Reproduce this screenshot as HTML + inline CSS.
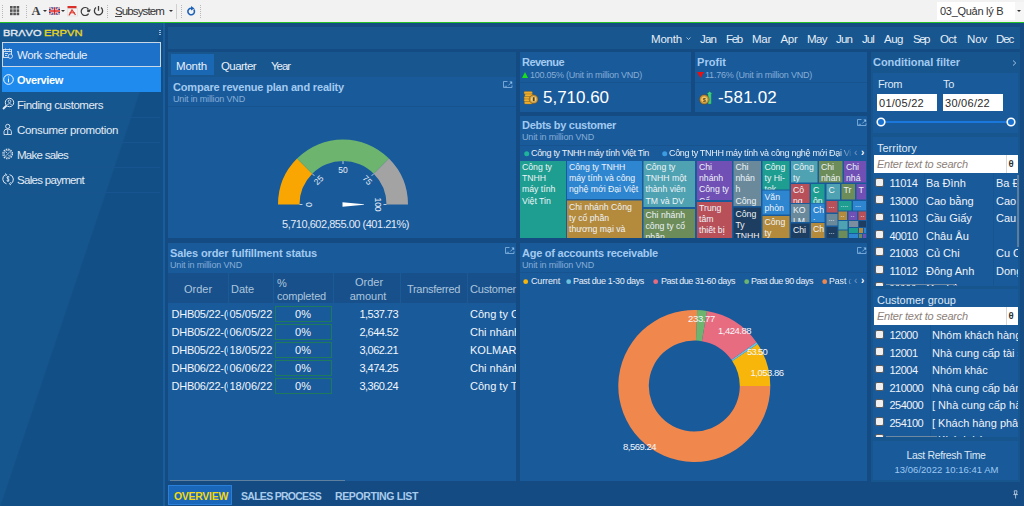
<!DOCTYPE html>
<html><head><meta charset="utf-8">
<style>
*{box-sizing:border-box;margin:0;padding:0}
html,body{width:1024px;height:506px;overflow:hidden;background:#144b82;font-family:"Liberation Sans",sans-serif;color:#fff;position:relative}
.a{position:absolute}
.t{position:absolute;white-space:nowrap;line-height:1}
svg{position:absolute;overflow:visible}

</style></head><body>
<div class="a" style="left:0px;top:0px;width:1024px;height:22px;background:#f2f2f2;"></div>
<div class="a" style="left:0px;top:22px;width:1024px;height:1px;background:#25c025;"></div>
<div class="a" style="left:2px;top:5px;width:1px;height:13px;background:repeating-linear-gradient(#b8b8b8 0 1px,transparent 1px 2px)"></div>
<div class="a" style="left:26px;top:5px;width:1px;height:13px;background:repeating-linear-gradient(#b8b8b8 0 1px,transparent 1px 2px)"></div>
<div class="a" style="left:107px;top:5px;width:1px;height:13px;background:repeating-linear-gradient(#b8b8b8 0 1px,transparent 1px 2px)"></div>
<div class="a" style="left:181px;top:5px;width:1px;height:13px;background:repeating-linear-gradient(#b8b8b8 0 1px,transparent 1px 2px)"></div>
<div class="a" style="left:200px;top:5px;width:1px;height:13px;background:repeating-linear-gradient(#b8b8b8 0 1px,transparent 1px 2px)"></div>
<div class="a" style="left:176px;top:4px;width:1px;height:15px;background:#d0d0d0;"></div>
<svg style="left:10px;top:6px" width="10" height="10"><rect x="0.0" y="0.0" width="2.6" height="2.6" fill="#555"/><rect x="0.0" y="3.3" width="2.6" height="2.6" fill="#555"/><rect x="0.0" y="6.6" width="2.6" height="2.6" fill="#555"/><rect x="3.3" y="0.0" width="2.6" height="2.6" fill="#555"/><rect x="3.3" y="3.3" width="2.6" height="2.6" fill="#555"/><rect x="3.3" y="6.6" width="2.6" height="2.6" fill="#555"/><rect x="6.6" y="0.0" width="2.6" height="2.6" fill="#555"/><rect x="6.6" y="3.3" width="2.6" height="2.6" fill="#555"/><rect x="6.6" y="6.6" width="2.6" height="2.6" fill="#555"/></svg>
<svg style="left:30px;top:0" width="14" height="20"><text x="1.5" y="15.3" font-family="Liberation Serif" font-weight="bold" font-size="12.5" fill="#3e3e3e">A</text></svg>
<svg style="left:43px;top:10px" width="4" height="3"><path d="M0 0H4L2 2Z" fill="#333"/></svg>
<svg style="left:49px;top:7px" width="11" height="8" viewBox="0 0 60 40"><rect width="60" height="40" fill="#2b3f8f"/><path d="M0 0L60 40M60 0L0 40" stroke="#fff" stroke-width="8"/><path d="M0 0L60 40M60 0L0 40" stroke="#d22" stroke-width="3"/><path d="M30 0V40M0 20H60" stroke="#fff" stroke-width="12"/><path d="M30 0V40M0 20H60" stroke="#d22" stroke-width="7"/></svg>
<svg style="left:61px;top:10px" width="4" height="3"><path d="M0 0H4L2 2Z" fill="#333"/></svg>
<svg style="left:67px;top:6px" width="11" height="10" viewBox="0 0 11 10"><rect x="0.5" y="0" width="9" height="2.5" fill="#d9302a"/><path d="M2 9.5L5 4L8.5 9" stroke="#e03a30" stroke-width="1.3" fill="none"/><path d="M2.5 6.8H8" stroke="#e03a30" stroke-width="1"/><rect x="0.5" y="2.5" width="10" height="7.5" fill="none" stroke="#ddd" stroke-width="0.6"/></svg>
<svg style="left:80px;top:6px" width="12" height="11" viewBox="0 0 12 11"><path d="M8.3 3A4 4 0 1 0 8.6 7.6" stroke="#3c3c3c" stroke-width="1.2" fill="none"/><path d="M6.6 3.6H11L9 6.6Z" fill="#3c3c3c"/><path d="M7 5.1H9.6" stroke="#3c3c3c" stroke-width="1.3"/></svg>
<svg style="left:93px;top:5px" width="11" height="11" viewBox="0 0 11 11"><path d="M3 2.6A4.1 4.1 0 1 0 8 2.6" stroke="#3c3c3c" stroke-width="1.3" fill="none"/><path d="M5.5 1V5.8" stroke="#3c3c3c" stroke-width="1.3"/></svg>
<div class="t" style="left:115px;top:6.00px;font-size:11.5px;color:#333;letter-spacing:-0.877px;">Subsystem</div>
<div class="a" style="left:115px;top:16px;width:7px;height:1px;background:#444;"></div>
<svg style="left:169px;top:10px" width="4" height="3"><path d="M0 0H4L2 2Z" fill="#333"/></svg>
<svg style="left:187px;top:6px" width="9" height="10" viewBox="0 0 9 10"><path d="M6.8 3.5A3.3 3.3 0 1 1 4.5 2.2" stroke="#1e62b8" stroke-width="1.6" fill="none"/><path d="M4 0L7.6 2.5L4 4.6Z" fill="#1e62b8"/></svg>
<div class="a" style="left:937px;top:2px;width:78px;height:18px;background:#ffffff;"></div>
<div class="a" style="left:1015px;top:2px;width:9px;height:18px;background:#f6f6f6;"></div>
<div class="t" style="left:940px;top:6.00px;font-size:11px;color:#333;letter-spacing:-0.281px;">03_Quản  lý B</div>
<svg style="left:1017px;top:10px" width="4" height="3"><path d="M0 0H4L2 2Z" fill="#333"/></svg>
<div class="a" style="left:0px;top:23px;width:163px;height:483px;background:linear-gradient(108.6deg,#16568f 49.7%,#124f87 50.3%);"></div>
<div class="a" style="left:163px;top:23px;width:2px;height:483px;background:#1a5d9c;"></div>
<svg style="left:0;top:0" width="100" height="40"><text x="3" y="36.1" textLength="38.5" lengthAdjust="spacingAndGlyphs" font-family="Liberation Sans" font-size="9.7" fill="#e6eaee" stroke="#e6eaee" stroke-width="0.35">BRΛVO</text><text x="44" y="36.1" textLength="38.5" lengthAdjust="spacingAndGlyphs" font-family="Liberation Sans" font-size="9.7" fill="#e8d321" stroke="#e8d321" stroke-width="0.35">ERPVN</text></svg>
<div class="a" style="left:159.3px;top:29.5px;width:1.6px;height:1.4px;background:#9fbad6;"></div>
<div class="a" style="left:159.3px;top:31.8px;width:1.6px;height:1.4px;background:#9fbad6;"></div>
<div class="a" style="left:159.3px;top:34.1px;width:1.6px;height:1.4px;background:#9fbad6;"></div>
<div class="a" style="left:2px;top:42px;width:159px;height:25px;background:#1e71c8;border:1px solid #c9d7e6"></div>
<div class="a" style="left:2px;top:67px;width:159px;height:25px;background:#1f8bee;"></div>
<div class="t" style="left:17px;top:50.00px;font-size:11.5px;color:#e8f0f8;letter-spacing:-0.451px;">Work schedule</div>
<div class="t" style="left:17px;top:75.00px;font-size:11px;color:#ffffff;font-weight:bold;letter-spacing:-0.365px;">Overview</div>
<div class="t" style="left:17px;top:100.00px;font-size:11.5px;color:#e3ecf5;letter-spacing:-0.469px;">Finding customers</div>
<div class="a" style="left:2px;top:117px;width:158px;height:1px;background:#18548f;"></div>
<div class="t" style="left:17px;top:125.00px;font-size:11.5px;color:#e3ecf5;letter-spacing:-0.355px;">Consumer promotion</div>
<div class="a" style="left:2px;top:142px;width:158px;height:1px;background:#18548f;"></div>
<div class="t" style="left:17px;top:150.00px;font-size:11.5px;color:#e3ecf5;letter-spacing:-0.717px;">Make sales</div>
<div class="a" style="left:2px;top:167px;width:158px;height:1px;background:#18548f;"></div>
<div class="t" style="left:17px;top:175.00px;font-size:11.5px;color:#e3ecf5;letter-spacing:-0.698px;">Sales payment</div>
<div class="a" style="left:2px;top:192px;width:158px;height:1px;background:#18548f;"></div>
<svg style="left:3px;top:48px" width="10" height="11" viewBox="0 0 10 11" fill="none" stroke="#dfe8f2" stroke-width="0.9"><rect x="0.5" y="1.5" width="8" height="8"/><path d="M0.5 3.5H8.5M2.5 0.5V2.5M6.5 0.5V2.5M2 5.5H5M2 7.5H4"/><circle cx="7.3" cy="8.2" r="2.2" fill="#1e71c8"/></svg>
<svg style="left:3px;top:74px" width="11" height="11" viewBox="0 0 11 11" fill="none" stroke="#fff" stroke-width="1"><circle cx="5.5" cy="5.5" r="4.8"/><path d="M5.5 4.5V8.3M5.5 2.6V3.4"/></svg>
<svg style="left:0;top:95px" width="16" height="18" viewBox="0 0 16 18" fill="none" stroke="#dfe8f2" stroke-width="1"><circle cx="9.5" cy="7.5" r="4.2"/><circle cx="9.5" cy="6.3" r="1.3" stroke-width="0.8"/><path d="M7.3 9.6Q9.5 7.6 11.7 9.6" stroke-width="0.8"/><path d="M6.6 10.5L3 14" stroke-width="1.8"/></svg>
<svg style="left:0;top:120px" width="16" height="18" viewBox="0 0 16 18" fill="none" stroke="#dfe8f2" stroke-width="0.9"><circle cx="7.7" cy="6.4" r="2.1"/><path d="M4 14.5V11.5Q4 9 7.7 9Q11.4 9 11.4 11.5V14.5Z"/><path d="M7.7 9.5V14.5"/></svg>
<svg style="left:0;top:145px" width="16" height="18" viewBox="0 0 16 18" fill="none" stroke="#dfe8f2" stroke-width="0.9"><circle cx="7.7" cy="8.9" r="4.8" stroke-dasharray="1.6 0.9" stroke-width="1.1"/><circle cx="7.7" cy="8.9" r="3.6" stroke-width="0.6"/><path d="M6 10.6L9.4 7.2" stroke-width="0.8"/><circle cx="6.4" cy="7.5" r="0.6" fill="#dfe8f2" stroke="none"/><circle cx="9" cy="10.3" r="0.6" fill="#dfe8f2" stroke="none"/></svg>
<svg style="left:0;top:170px" width="16" height="18" viewBox="0 0 16 18" fill="none" stroke="#dfe8f2" stroke-width="1"><path d="M5.5 4.5A5 5 0 0 0 6.5 13.8M10.5 14A5 5 0 0 0 9.5 4.6"/><path d="M5 3.5L6.8 4.8L5.3 6.3M11 15L9.2 13.7L10.7 12.2" stroke-width="0.9"/><path d="M9.4 7Q8 6.2 7 7Q6.6 8.4 8 8.8Q9.4 9.2 9 10.6Q8 11.4 6.6 10.6M8 6V12" stroke-width="0.9"/></svg>
<div class="a" style="left:168px;top:27px;width:852px;height:22px;background:#17568f;"></div>
<div class="t" style="left:651px;top:34.00px;font-size:11.5px;color:#e6eef7;letter-spacing:-0.194px;">Month</div>
<svg style="left:686px;top:37px" width="5" height="3"><path d="M0.5 0.5L2.5 2.5L4.5 0.5" stroke="#c8d8e8" stroke-width="0.8" fill="none"/></svg>
<div class="t" style="left:700px;top:34.00px;font-size:11.5px;color:#e6eef7;letter-spacing:-0.849px;">Jan</div>
<div class="t" style="left:726px;top:34.00px;font-size:11.5px;color:#e6eef7;letter-spacing:-1.276px;">Feb</div>
<div class="t" style="left:752px;top:34.00px;font-size:11.5px;color:#e6eef7;letter-spacing:-0.271px;">Mar</div>
<div class="t" style="left:780.5px;top:34.00px;font-size:11.5px;color:#e6eef7;letter-spacing:-0.302px;">Apr</div>
<div class="t" style="left:807px;top:34.00px;font-size:11.5px;color:#e6eef7;letter-spacing:-0.578px;">May</div>
<div class="t" style="left:836px;top:34.00px;font-size:11.5px;color:#e6eef7;letter-spacing:-0.849px;">Jun</div>
<div class="t" style="left:862px;top:34.00px;font-size:11.5px;color:#e6eef7;letter-spacing:-0.901px;">Jul</div>
<div class="t" style="left:884px;top:34.00px;font-size:11.5px;color:#e6eef7;letter-spacing:-0.490px;">Aug</div>
<div class="t" style="left:913px;top:34.00px;font-size:11.5px;color:#e6eef7;letter-spacing:-1.490px;">Sep</div>
<div class="t" style="left:940px;top:34.00px;font-size:11.5px;color:#e6eef7;letter-spacing:-0.630px;">Oct</div>
<div class="t" style="left:967px;top:34.00px;font-size:11.5px;color:#e6eef7;letter-spacing:-0.151px;">Nov</div>
<div class="t" style="left:996px;top:34.00px;font-size:11.5px;color:#e6eef7;letter-spacing:-1.151px;">Dec</div>
<div class="a" style="left:168px;top:52px;width:348px;height:25px;background:#17568f;"></div>
<div class="a" style="left:168px;top:77px;width:348px;height:161px;background:#195a9b;"></div>
<div class="a" style="left:171px;top:54px;width:43px;height:21px;background:#1a67b4;"></div>
<div class="t" style="left:176px;top:61.00px;font-size:11.5px;color:#e8f0f8;letter-spacing:-0.194px;">Month</div>
<div class="t" style="left:221px;top:61.00px;font-size:11.5px;color:#e8f0f8;letter-spacing:-0.571px;">Quarter</div>
<div class="t" style="left:271px;top:61.00px;font-size:11.5px;color:#e8f0f8;letter-spacing:-1.062px;">Year</div>
<div class="t" style="left:173px;top:82.00px;font-size:11px;color:#a2caf0;font-weight:bold;letter-spacing:-0.177px;">Compare revenue plan and reality</div>
<div class="t" style="left:173px;top:95.00px;font-size:9px;color:#86aed6;letter-spacing:-0.160px;">Unit in million VND</div>
<div class="a" style="left:168px;top:106px;width:348px;height:1px;background:#17548f;"></div>
<svg style="left:503px;top:81px" width="10" height="8" viewBox="0 0 10 8" fill="none" stroke="#7eaedd" stroke-width="0.9"><path d="M4.5 0.5H0.5V6.5H9V4.3"/><path d="M1.5 5.3H4" stroke-width="0.8"/><path d="M5.3 4.5L8.2 1.6"/><path d="M6.4 0.6H9.2V3.4Z" fill="#8cc0ec" stroke="none"/></svg>
<svg style="left:0;top:0" width="1024" height="506"><path d="M278.00 204.50A65 65 0 0 1 297.04 158.54L312.24 173.74A43.5 43.5 0 0 0 299.50 204.50Z" fill="#f9a602"/><path d="M297.04 158.54A65 65 0 0 1 388.96 158.54L373.76 173.74A43.5 43.5 0 0 0 312.24 173.74Z" fill="#6db56f"/><path d="M388.96 158.54A65 65 0 0 1 408.00 204.50L386.50 204.50A43.5 43.5 0 0 0 373.76 173.74Z" fill="#a3a3a3"/><line x1="299.50" y1="204.50" x2="302.50" y2="204.50" stroke="#e0e8f0" stroke-width="0.8"/><text x="308.50" y="204.50" transform="rotate(-90.0 308.50 204.50)" font-family="Liberation Sans" font-size="8.5" fill="#e6eef6" text-anchor="middle" dominant-baseline="central">0</text><line x1="312.24" y1="173.74" x2="314.36" y2="175.86" stroke="#e0e8f0" stroke-width="0.8"/><text x="318.60" y="180.10" transform="rotate(-45.0 318.60 180.10)" font-family="Liberation Sans" font-size="8.5" fill="#e6eef6" text-anchor="middle" dominant-baseline="central">25</text><line x1="343.00" y1="161.00" x2="343.00" y2="164.00" stroke="#e0e8f0" stroke-width="0.8"/><text x="343.00" y="170.00" transform="rotate(0.0 343.00 170.00)" font-family="Liberation Sans" font-size="8.5" fill="#e6eef6" text-anchor="middle" dominant-baseline="central">50</text><line x1="373.76" y1="173.74" x2="371.64" y2="175.86" stroke="#e0e8f0" stroke-width="0.8"/><text x="367.40" y="180.10" transform="rotate(45.0 367.40 180.10)" font-family="Liberation Sans" font-size="8.5" fill="#e6eef6" text-anchor="middle" dominant-baseline="central">75</text><line x1="386.50" y1="204.50" x2="383.50" y2="204.50" stroke="#e0e8f0" stroke-width="0.8"/><text x="377.50" y="204.50" transform="rotate(90.0 377.50 204.50)" font-family="Liberation Sans" font-size="8.5" fill="#e6eef6" text-anchor="middle" dominant-baseline="central">100</text><path d="M342.5 202.2L364 204.2L364 204.8L342.5 206.8Z" fill="#fff"/></svg>
<div class="t" style="left:282px;top:219.00px;font-size:11px;color:#e3ebf4;letter-spacing:-0.479px;">5,710,602,855.00 (401.21%)</div>
<div class="a" style="left:168px;top:243px;width:348px;height:238px;background:#195a9b;"></div>
<div class="t" style="left:170px;top:248.00px;font-size:11px;color:#a2caf0;font-weight:bold;letter-spacing:-0.133px;">Sales order fulfillment status</div>
<div class="t" style="left:170px;top:261.00px;font-size:9px;color:#86aed6;letter-spacing:-0.160px;">Unit in million VND</div>
<svg style="left:505px;top:247px" width="10" height="8" viewBox="0 0 10 8" fill="none" stroke="#7eaedd" stroke-width="0.9"><path d="M4.5 0.5H0.5V6.5H9V4.3"/><path d="M1.5 5.3H4" stroke-width="0.8"/><path d="M5.3 4.5L8.2 1.6"/><path d="M6.4 0.6H9.2V3.4Z" fill="#8cc0ec" stroke="none"/></svg>
<div class="a" style="left:168px;top:273px;width:348px;height:30px;background:#17508a;"></div>
<div class="a" style="left:228px;top:273px;width:1px;height:30px;background:#1b5a96;"></div>
<div class="a" style="left:228px;top:303px;width:1px;height:5px;background:#1b5a96;"></div>
<div class="a" style="left:273px;top:273px;width:1px;height:30px;background:#1b5a96;"></div>
<div class="a" style="left:273px;top:303px;width:1px;height:5px;background:#1b5a96;"></div>
<div class="a" style="left:333px;top:273px;width:1px;height:30px;background:#1b5a96;"></div>
<div class="a" style="left:333px;top:303px;width:1px;height:5px;background:#1b5a96;"></div>
<div class="a" style="left:400px;top:273px;width:1px;height:30px;background:#1b5a96;"></div>
<div class="a" style="left:400px;top:303px;width:1px;height:5px;background:#1b5a96;"></div>
<div class="a" style="left:467px;top:273px;width:1px;height:30px;background:#1b5a96;"></div>
<div class="a" style="left:467px;top:303px;width:1px;height:5px;background:#1b5a96;"></div>
<div class="t" style="left:-102px;width:600px;text-align:center;top:284.00px;font-size:11px;color:#adc5de;">Order</div>
<div class="t" style="left:231px;top:284.00px;font-size:11px;color:#adc5de;">Date</div>
<div class="t" style="left:277px;top:278.00px;font-size:11px;color:#adc5de;">%</div>
<div class="t" style="left:277px;top:291.00px;font-size:11px;color:#adc5de;letter-spacing:-0.196px;">completed</div>
<div class="t" style="left:69px;width:600px;text-align:center;top:277.00px;font-size:11px;color:#adc5de;">Order</div>
<div class="t" style="left:68px;width:600px;text-align:center;top:291.00px;font-size:11px;color:#adc5de;">amount</div>
<div class="t" style="left:407px;top:284.00px;font-size:11px;color:#adc5de;letter-spacing:-0.314px;">Transferred</div>
<div class="t" style="left:470px;top:284.00px;font-size:11px;color:#adc5de;letter-spacing:-0.211px;">Customer</div>
<div class="a" style="left:168px;top:303px;width:348px;height:180px;overflow:hidden">
<div class="a" style="left:107px;top:3px;width:57px;height:16px;background:transparent;border:1px solid #1e7a5c"></div>
<div class="a" style="left:107px;top:21px;width:57px;height:16px;background:transparent;border:1px solid #1e7a5c"></div>
<div class="a" style="left:107px;top:39px;width:57px;height:16px;background:transparent;border:1px solid #1e7a5c"></div>
<div class="a" style="left:107px;top:57px;width:57px;height:16px;background:transparent;border:1px solid #1e7a5c"></div>
<div class="a" style="left:107px;top:75px;width:57px;height:16px;background:transparent;border:1px solid #1e7a5c"></div>
</div>
<div class="a" style="left:171px;top:303px;width:56.5px;height:130px;overflow:hidden">
<div class="t" style="left:0.5px;top:6.00px;font-size:11px;color:#f2f6fa;letter-spacing:-0.25px">DHB05/22-(0000</div>
</div>
<div class="a" style="left:229px;top:303px;width:44px;height:130px;overflow:hidden">
<div class="t" style="left:0.5px;top:6.00px;font-size:11px;color:#f2f6fa;">05/05/22</div>
</div>
<div class="t" style="left:3px;width:600px;text-align:center;top:309.00px;font-size:11px;color:#f2f6fa;">0%</div>
<div class="t" style="right:626px;top:309.00px;font-size:11px;color:#f2f6fa;letter-spacing:-0.541px;">1,537.73</div>
<div class="t" style="left:470px;top:309.00px;font-size:11px;color:#f2f6fa;">Công ty C</div>
<div class="a" style="left:171px;top:303px;width:56.5px;height:130px;overflow:hidden">
<div class="t" style="left:0.5px;top:24.00px;font-size:11px;color:#f2f6fa;letter-spacing:-0.25px">DHB05/22-(0000</div>
</div>
<div class="a" style="left:229px;top:303px;width:44px;height:130px;overflow:hidden">
<div class="t" style="left:0.5px;top:24.00px;font-size:11px;color:#f2f6fa;">06/05/22</div>
</div>
<div class="t" style="left:3px;width:600px;text-align:center;top:327.00px;font-size:11px;color:#f2f6fa;">0%</div>
<div class="t" style="right:626px;top:327.00px;font-size:11px;color:#f2f6fa;letter-spacing:-0.541px;">2,644.52</div>
<div class="t" style="left:470px;top:327.00px;font-size:11px;color:#f2f6fa;">Chi nhánh</div>
<div class="a" style="left:171px;top:303px;width:56.5px;height:130px;overflow:hidden">
<div class="t" style="left:0.5px;top:42.00px;font-size:11px;color:#f2f6fa;letter-spacing:-0.25px">DHB05/22-(0000</div>
</div>
<div class="a" style="left:229px;top:303px;width:44px;height:130px;overflow:hidden">
<div class="t" style="left:0.5px;top:42.00px;font-size:11px;color:#f2f6fa;">18/05/22</div>
</div>
<div class="t" style="left:3px;width:600px;text-align:center;top:345.00px;font-size:11px;color:#f2f6fa;">0%</div>
<div class="t" style="right:626px;top:345.00px;font-size:11px;color:#f2f6fa;letter-spacing:-0.541px;">3,062.21</div>
<div class="t" style="left:470px;top:345.00px;font-size:11px;color:#f2f6fa;">KOLMAR</div>
<div class="a" style="left:171px;top:303px;width:56.5px;height:130px;overflow:hidden">
<div class="t" style="left:0.5px;top:60.00px;font-size:11px;color:#f2f6fa;letter-spacing:-0.25px">DHB06/22-(0000</div>
</div>
<div class="a" style="left:229px;top:303px;width:44px;height:130px;overflow:hidden">
<div class="t" style="left:0.5px;top:60.00px;font-size:11px;color:#f2f6fa;">06/06/22</div>
</div>
<div class="t" style="left:3px;width:600px;text-align:center;top:363.00px;font-size:11px;color:#f2f6fa;">0%</div>
<div class="t" style="right:626px;top:363.00px;font-size:11px;color:#f2f6fa;letter-spacing:-0.541px;">3,474.25</div>
<div class="t" style="left:470px;top:363.00px;font-size:11px;color:#f2f6fa;">Chi nhánh</div>
<div class="a" style="left:171px;top:303px;width:56.5px;height:130px;overflow:hidden">
<div class="t" style="left:0.5px;top:78.00px;font-size:11px;color:#f2f6fa;letter-spacing:-0.25px">DHB06/22-(0000</div>
</div>
<div class="a" style="left:229px;top:303px;width:44px;height:130px;overflow:hidden">
<div class="t" style="left:0.5px;top:78.00px;font-size:11px;color:#f2f6fa;">18/06/22</div>
</div>
<div class="t" style="left:3px;width:600px;text-align:center;top:381.00px;font-size:11px;color:#f2f6fa;">0%</div>
<div class="t" style="right:626px;top:381.00px;font-size:11px;color:#f2f6fa;letter-spacing:-0.541px;">3,360.24</div>
<div class="t" style="left:470px;top:381.00px;font-size:11px;color:#f2f6fa;">Công ty T</div>
<div class="a" style="left:516px;top:303px;width:4px;height:180px;background:#144b82;"></div>
<div class="a" style="left:170px;top:480px;width:175px;height:1px;background:#60809f;"></div>
<div class="a" style="left:520px;top:52px;width:171px;height:60px;background:#195a9b;"></div>
<div class="a" style="left:520px;top:82px;width:171px;height:1px;background:#17548f;"></div>
<div class="t" style="left:522px;top:57.00px;font-size:11px;color:#a2caf0;font-weight:bold;letter-spacing:-0.551px;">Revenue</div>
<svg style="left:522px;top:72px" width="6" height="6"><path d="M3 0L6 6H0Z" fill="#18e018"/></svg>
<div class="t" style="left:530px;top:71.00px;font-size:9px;color:#86aed6;letter-spacing:-0.243px;">100.05% (Unit in million VND)</div>
<div class="t" style="left:543px;top:89.00px;font-size:17px;color:#ffffff;letter-spacing:-0.023px;">5,710.60</div>
<svg style="left:520px;top:86px" width="20" height="20" viewBox="0 0 20 20">
<g fill="#f0b030" stroke="#9a6a10" stroke-width="0.4"><rect x="4" y="5.6" width="8.4" height="2.5" rx="1"/><rect x="4.8" y="8.1" width="8" height="2.5" rx="1"/><rect x="4" y="10.6" width="8.4" height="2.5" rx="1"/><rect x="4" y="13.1" width="8.4" height="2.5" rx="1"/><rect x="4.4" y="15.6" width="8" height="2.4" rx="1"/></g>
<circle cx="13.6" cy="13.2" r="4.4" fill="#c89a40" stroke="#6a4a10" stroke-width="0.5"/><circle cx="13.6" cy="13.2" r="3.2" fill="#f2d080" stroke="#9a7020" stroke-width="0.4"/><rect x="12.8" y="11.2" width="1.8" height="4" fill="#5a4010"/></svg>
<div class="a" style="left:695px;top:52px;width:172px;height:60px;background:#195a9b;"></div>
<div class="a" style="left:695px;top:82px;width:172px;height:1px;background:#17548f;"></div>
<div class="t" style="left:697px;top:57.00px;font-size:11px;color:#a2caf0;font-weight:bold;letter-spacing:0.044px;">Profit</div>
<svg style="left:697px;top:72px" width="7" height="6"><path d="M0 0H7L3.5 6Z" fill="#e81010"/></svg>
<div class="t" style="left:705px;top:71.00px;font-size:9px;color:#86aed6;letter-spacing:-0.228px;">11.76% (Unit in million VND)</div>
<div class="t" style="left:718px;top:89.00px;font-size:17px;color:#ffffff;letter-spacing:0.190px;">-581.02</div>
<svg style="left:695px;top:86px" width="22" height="22" viewBox="0 0 22 22">
<path d="M13 18V8H11.6L14.6 5.4L17.6 8H16.3V18Z" fill="#3ccf8a" stroke="#1a6a40" stroke-width="0.4"/>
<circle cx="9.3" cy="13.5" r="4.8" fill="#c8963a" stroke="#5a3a10" stroke-width="0.5"/><circle cx="9.3" cy="13.5" r="3.5" fill="#f0c868" stroke="#9a7020" stroke-width="0.4"/><text x="9.3" y="15.6" font-size="5.5" font-family="Liberation Sans" font-weight="bold" fill="#5a4010" text-anchor="middle">$</text></svg>
<div class="a" style="left:520px;top:116px;width:347px;height:122px;background:#195a9b;"></div>
<div class="a" style="left:520px;top:145px;width:347px;height:1px;background:#17548f;"></div>
<div class="t" style="left:522px;top:120.00px;font-size:11px;color:#a2caf0;font-weight:bold;letter-spacing:-0.296px;">Debts by customer</div>
<div class="t" style="left:522px;top:133.00px;font-size:9px;color:#86aed6;letter-spacing:-0.160px;">Unit in million VND</div>
<svg style="left:857px;top:119px" width="10" height="8" viewBox="0 0 10 8" fill="none" stroke="#7eaedd" stroke-width="0.9"><path d="M4.5 0.5H0.5V6.5H9V4.3"/><path d="M1.5 5.3H4" stroke-width="0.8"/><path d="M5.3 4.5L8.2 1.6"/><path d="M6.4 0.6H9.2V3.4Z" fill="#8cc0ec" stroke="none"/></svg>
<svg style="left:524px;top:151px" width="6" height="6"><circle cx="2.7" cy="2.7" r="2.5" fill="#1fb39a"/></svg>
<div class="t" style="left:531px;top:149.00px;font-size:9px;color:#e8eff6;letter-spacing:-0.324px;">Công ty TNHH máy tính Việt Tin</div>
<svg style="left:662px;top:151px" width="6" height="6"><circle cx="2.7" cy="2.7" r="2.5" fill="#3d9be0"/></svg>
<div class="a" style="left:669px;top:140px;width:184px;height:20px;overflow:hidden;-webkit-mask-image:linear-gradient(90deg,#000 92%,transparent)">
<div class="t" style="left:0px;top:9.00px;font-size:9px;color:#e8eff6;letter-spacing:-0.315px;">Công ty TNHH máy tính và công nghệ mới Đại Vi</div>
</div>
<div class="t" style="left:854px;top:148.00px;font-size:10px;color:#7f9fc4;">‹</div>
<div class="t" style="left:861px;top:148.00px;font-size:10px;color:#ffffff;font-weight:bold;">›</div>
<svg style="left:0;top:0" width="1024" height="506"><defs><clipPath id="tc0"><rect x="520" y="161" width="46" height="77"/></clipPath><clipPath id="tc1"><rect x="567" y="161" width="75" height="38"/></clipPath><clipPath id="tc2"><rect x="567" y="200.5" width="75" height="37.5"/></clipPath><clipPath id="tc3"><rect x="643.5" y="161" width="51.5" height="46"/></clipPath><clipPath id="tc4"><rect x="643.5" y="209" width="51.5" height="29"/></clipPath><clipPath id="tc5"><rect x="697" y="161" width="35" height="39"/></clipPath><clipPath id="tc6"><rect x="697" y="202" width="35" height="36"/></clipPath><clipPath id="tc7"><rect x="733.5" y="161" width="27.5" height="45"/></clipPath><clipPath id="tc8"><rect x="733.5" y="207.5" width="27.5" height="30.5"/></clipPath><clipPath id="tc9"><rect x="762.5" y="161" width="27.0" height="28.5"/></clipPath><clipPath id="tc10"><rect x="762.5" y="190.5" width="27.0" height="24.0"/></clipPath><clipPath id="tc11"><rect x="762.5" y="216" width="27.0" height="22"/></clipPath><clipPath id="tc12"><rect x="791" y="161" width="26.5" height="21.5"/></clipPath><clipPath id="tc13"><rect x="819" y="161" width="23.5" height="21.5"/></clipPath><clipPath id="tc14"><rect x="844" y="161" width="22" height="21.5"/></clipPath><clipPath id="tc15"><rect x="791" y="184" width="18.5" height="19"/></clipPath><clipPath id="tc16"><rect x="811" y="184" width="13.5" height="19"/></clipPath><clipPath id="tc17"><rect x="826.5" y="184" width="13.5" height="15.5"/></clipPath><clipPath id="tc18"><rect x="841.5" y="184" width="13.5" height="15.5"/></clipPath><clipPath id="tc19"><rect x="856.5" y="184" width="9.5" height="15.5"/></clipPath><clipPath id="tc20"><rect x="791" y="204" width="18.5" height="18"/></clipPath><clipPath id="tc21"><rect x="791" y="223.5" width="18.5" height="14.5"/></clipPath><clipPath id="tc22"><rect x="811" y="203.5" width="13.5" height="18.5"/></clipPath><clipPath id="tc23"><rect x="811" y="223" width="13.5" height="15"/></clipPath><clipPath id="tc24"><rect x="826.5" y="201" width="11.0" height="11.5"/></clipPath><clipPath id="tc25"><rect x="826.5" y="214" width="11.0" height="11.5"/></clipPath><clipPath id="tc26"><rect x="826.5" y="227" width="11.0" height="11"/></clipPath><clipPath id="tc27"><rect x="838.5" y="201" width="13.0" height="9.5"/></clipPath><clipPath id="tc28"><rect x="853" y="201" width="13" height="9.5"/></clipPath><clipPath id="tc29"><rect x="838.5" y="211.5" width="8.5" height="8.5"/></clipPath><clipPath id="tc30"><rect x="848.5" y="211.5" width="8.5" height="8.5"/></clipPath><clipPath id="tc31"><rect x="858.5" y="211.5" width="7.5" height="8.5"/></clipPath><clipPath id="tc32"><rect x="838.5" y="221" width="9.0" height="8.5"/></clipPath><clipPath id="tc33"><rect x="849" y="221" width="9" height="6"/></clipPath><clipPath id="tc34"><rect x="859" y="221" width="7" height="6"/></clipPath><clipPath id="tc35"><rect x="849" y="228" width="9" height="5"/></clipPath><clipPath id="tc36"><rect x="859" y="228" width="4" height="5"/></clipPath><clipPath id="tc37"><rect x="864" y="228" width="2" height="5"/></clipPath><clipPath id="tc38"><rect x="838.5" y="230.5" width="9.0" height="7.5"/></clipPath><clipPath id="tc39"><rect x="849" y="234" width="9" height="4"/></clipPath><clipPath id="tc40"><rect x="859" y="234" width="3" height="4"/></clipPath><clipPath id="tc41"><rect x="863" y="234" width="3" height="4"/></clipPath></defs><rect x="520" y="161" width="46" height="77" fill="#1e9e90"/><g clip-path="url(#tc0)" font-family="Liberation Sans" font-size="8.7" fill="#eef3f8"><text x="522" y="170.0">Công ty</text><text x="522" y="181.2">TNHH</text><text x="522" y="192.4">máy tính</text><text x="522" y="203.6">Việt Tin</text></g><rect x="567" y="161" width="75" height="38" fill="#2e86d0"/><g clip-path="url(#tc1)" font-family="Liberation Sans" font-size="8.7" fill="#eef3f8"><text x="569" y="170.0">Công ty TNHH</text><text x="569" y="181.2">máy tính và công</text><text x="569" y="192.4">nghệ mới Đại Việt</text></g><rect x="567" y="200.5" width="75" height="37.5" fill="#b48a3c"/><g clip-path="url(#tc2)" font-family="Liberation Sans" font-size="8.7" fill="#eef3f8"><text x="569" y="209.5">Chi nhánh Công</text><text x="569" y="220.7">ty cổ phần</text><text x="569" y="231.9">thương mại và</text></g><rect x="643.5" y="161" width="51.5" height="46" fill="#4ea2b1"/><g clip-path="url(#tc3)" font-family="Liberation Sans" font-size="8.7" fill="#eef3f8"><text x="645.5" y="170.0">Công ty</text><text x="645.5" y="181.2">TNHH một</text><text x="645.5" y="192.4">thành viên</text><text x="645.5" y="203.6">TM và DV</text></g><rect x="643.5" y="209" width="51.5" height="29" fill="#6c8c5a"/><g clip-path="url(#tc4)" font-family="Liberation Sans" font-size="8.7" fill="#eef3f8"><text x="645.5" y="218.0">Chi nhánh</text><text x="645.5" y="229.2">công ty cổ</text><text x="645.5" y="240.4">phần</text></g><rect x="697" y="161" width="35" height="39" fill="#7050b4"/><g clip-path="url(#tc5)" font-family="Liberation Sans" font-size="8.7" fill="#eef3f8"><text x="699" y="170.0">Chi</text><text x="699" y="181.2">nhánh</text><text x="699" y="192.4">Công ty</text><text x="699" y="203.6">Cổ</text></g><rect x="697" y="202" width="35" height="36" fill="#b8505a"/><g clip-path="url(#tc6)" font-family="Liberation Sans" font-size="8.7" fill="#eef3f8"><text x="699" y="211.0">Trung</text><text x="699" y="222.2">tâm</text><text x="699" y="233.4">thiết bị</text></g><rect x="733.5" y="161" width="27.5" height="45" fill="#6a8a9c"/><g clip-path="url(#tc7)" font-family="Liberation Sans" font-size="8.7" fill="#eef3f8"><text x="735.5" y="170.0">Chi</text><text x="735.5" y="181.2">nhán</text><text x="735.5" y="192.4">h</text><text x="735.5" y="203.6">Công</text></g><rect x="733.5" y="207.5" width="27.5" height="30.5" fill="#1d3e60"/><g clip-path="url(#tc8)" font-family="Liberation Sans" font-size="8.7" fill="#eef3f8"><text x="735.5" y="216.5">Công</text><text x="735.5" y="227.7">Ty</text><text x="735.5" y="238.9">TNHH</text></g><rect x="762.5" y="161" width="27.0" height="28.5" fill="#1e9e90"/><g clip-path="url(#tc9)" font-family="Liberation Sans" font-size="8.7" fill="#eef3f8"><text x="764.5" y="170.0">Công</text><text x="764.5" y="181.2">ty Hi-</text><text x="764.5" y="192.4">tek</text></g><rect x="762.5" y="190.5" width="27.0" height="24.0" fill="#2e86d0"/><g clip-path="url(#tc10)" font-family="Liberation Sans" font-size="8.7" fill="#eef3f8"><text x="764.5" y="199.5">Văn</text><text x="764.5" y="210.7">phòn</text></g><rect x="762.5" y="216" width="27.0" height="22" fill="#b48a3c"/><g clip-path="url(#tc11)" font-family="Liberation Sans" font-size="8.7" fill="#eef3f8"><text x="764.5" y="225.0">Công</text><text x="764.5" y="236.2">ty</text></g><rect x="791" y="161" width="26.5" height="21.5" fill="#4ea2b1"/><g clip-path="url(#tc12)" font-family="Liberation Sans" font-size="8.7" fill="#eef3f8"><text x="793" y="170.0">Công</text><text x="793" y="181.2">ty</text></g><rect x="819" y="161" width="23.5" height="21.5" fill="#6c8c5a"/><g clip-path="url(#tc13)" font-family="Liberation Sans" font-size="8.7" fill="#eef3f8"><text x="821" y="170.0">Chi</text><text x="821" y="181.2">nhán</text></g><rect x="844" y="161" width="22" height="21.5" fill="#7050b4"/><g clip-path="url(#tc14)" font-family="Liberation Sans" font-size="8.7" fill="#eef3f8"><text x="846" y="170.0">Chi</text><text x="846" y="181.2">nhá</text></g><rect x="791" y="184" width="18.5" height="19" fill="#b8505a"/><g clip-path="url(#tc15)" font-family="Liberation Sans" font-size="8.7" fill="#eef3f8"><text x="793" y="193.0">Cô</text><text x="793" y="204.2">ng</text></g><rect x="811" y="184" width="13.5" height="19" fill="#1e9e90"/><g clip-path="url(#tc16)" font-family="Liberation Sans" font-size="8.7" fill="#eef3f8"><text x="813" y="193.0">C</text><text x="813" y="204.2">ôn</text></g><rect x="826.5" y="184" width="13.5" height="15.5" fill="#4ea2b1"/><g clip-path="url(#tc17)" font-family="Liberation Sans" font-size="8.7" fill="#eef3f8"><text x="828.5" y="193.0">C</text><text x="828.5" y="204.2"></text></g><rect x="841.5" y="184" width="13.5" height="15.5" fill="#6c8c5a"/><g clip-path="url(#tc18)" font-family="Liberation Sans" font-size="8.7" fill="#eef3f8"><text x="843.5" y="193.0">Tr</text></g><rect x="856.5" y="184" width="9.5" height="15.5" fill="#7050b4"/><g clip-path="url(#tc19)" font-family="Liberation Sans" font-size="8.7" fill="#eef3f8"><text x="858.5" y="193.0">T</text></g><rect x="791" y="204" width="18.5" height="18" fill="#6a8a9c"/><g clip-path="url(#tc20)" font-family="Liberation Sans" font-size="8.7" fill="#eef3f8"><text x="793" y="213.0">KO</text><text x="793" y="224.2">LM</text></g><rect x="791" y="223.5" width="18.5" height="14.5" fill="#1d3e60"/><g clip-path="url(#tc21)" font-family="Liberation Sans" font-size="8.7" fill="#eef3f8"><text x="793" y="232.5">Chi</text></g><rect x="811" y="203.5" width="13.5" height="18.5" fill="#2e86d0"/><g clip-path="url(#tc22)" font-family="Liberation Sans" font-size="8.7" fill="#eef3f8"><text x="813" y="212.5">Ch</text><text x="813" y="223.7">:</text></g><rect x="811" y="223" width="13.5" height="15" fill="#b48a3c"/><g clip-path="url(#tc23)" font-family="Liberation Sans" font-size="8.7" fill="#eef3f8"><text x="813" y="232.0">Ch</text></g><rect x="826.5" y="201" width="11.0" height="11.5" fill="#b8505a"/><g clip-path="url(#tc24)" font-family="Liberation Sans" font-size="8.7" fill="#eef3f8"><text x="828.5" y="207.75" font-size="7">...</text></g><rect x="826.5" y="214" width="11.0" height="11.5" fill="#6a8a9c"/><g clip-path="url(#tc25)" font-family="Liberation Sans" font-size="8.7" fill="#eef3f8"><text x="828.5" y="220.75" font-size="7">...</text></g><rect x="826.5" y="227" width="11.0" height="11" fill="#1d3e60"/><g clip-path="url(#tc26)" font-family="Liberation Sans" font-size="8.7" fill="#eef3f8"><text x="828.5" y="233.5" font-size="7">...</text></g><rect x="838.5" y="201" width="13.0" height="9.5" fill="#1e9e90"/><g clip-path="url(#tc27)" font-family="Liberation Sans" font-size="8.7" fill="#eef3f8"><text x="840.5" y="206.75" font-size="7">....</text></g><rect x="853" y="201" width="13" height="9.5" fill="#2e86d0"/><g clip-path="url(#tc28)" font-family="Liberation Sans" font-size="8.7" fill="#eef3f8"><text x="855" y="206.75" font-size="7">...</text></g><rect x="838.5" y="211.5" width="8.5" height="8.5" fill="#b48a3c"/><g clip-path="url(#tc29)" font-family="Liberation Sans" font-size="8.7" fill="#eef3f8"><text x="840.5" y="216.75" font-size="7">..</text></g><rect x="848.5" y="211.5" width="8.5" height="8.5" fill="#7050b4"/><g clip-path="url(#tc30)" font-family="Liberation Sans" font-size="8.7" fill="#eef3f8"><text x="850.5" y="216.75" font-size="7">..</text></g><rect x="858.5" y="211.5" width="7.5" height="8.5" fill="#b8505a"/><g clip-path="url(#tc31)" font-family="Liberation Sans" font-size="8.7" fill="#eef3f8"><text x="860.5" y="216.75" font-size="7">..</text></g><rect x="838.5" y="221" width="9.0" height="8.5" fill="#4ea2b1"/><rect x="849" y="221" width="9" height="6" fill="#7a8ea0"/><rect x="859" y="221" width="7" height="6" fill="#1d3e60"/><rect x="849" y="228" width="9" height="5" fill="#1e9e90"/><rect x="859" y="228" width="4" height="5" fill="#b48a3c"/><rect x="864" y="228" width="2" height="5" fill="#2e86d0"/><rect x="838.5" y="230.5" width="9.0" height="7.5" fill="#6c8c5a"/><rect x="849" y="234" width="9" height="4" fill="#2e86d0"/><rect x="859" y="234" width="3" height="4" fill="#6c8c5a"/><rect x="863" y="234" width="3" height="4" fill="#7050b4"/></svg>
<div class="a" style="left:520px;top:243px;width:347px;height:238px;background:#195a9b;"></div>
<div class="a" style="left:520px;top:272px;width:347px;height:1px;background:#17548f;"></div>
<div class="t" style="left:522px;top:248.00px;font-size:11px;color:#a2caf0;font-weight:bold;letter-spacing:-0.248px;">Age of accounts receivable</div>
<div class="t" style="left:522px;top:261.00px;font-size:9px;color:#86aed6;letter-spacing:-0.160px;">Unit in million VND</div>
<svg style="left:857px;top:247px" width="10" height="8" viewBox="0 0 10 8" fill="none" stroke="#7eaedd" stroke-width="0.9"><path d="M4.5 0.5H0.5V6.5H9V4.3"/><path d="M1.5 5.3H4" stroke-width="0.8"/><path d="M5.3 4.5L8.2 1.6"/><path d="M6.4 0.6H9.2V3.4Z" fill="#8cc0ec" stroke="none"/></svg>
<svg style="left:522.5px;top:278.5px" width="6" height="6"><circle cx="2.7" cy="2.7" r="2.4" fill="#f8b60a"/></svg>
<div class="t" style="left:531px;top:277.00px;font-size:9px;color:#e8eff6;letter-spacing:-0.145px;">Current</div>
<svg style="left:565.5px;top:278.5px" width="6" height="6"><circle cx="2.7" cy="2.7" r="2.4" fill="#68c2de"/></svg>
<div class="t" style="left:573px;top:277.00px;font-size:9px;color:#e8eff6;letter-spacing:-0.365px;">Past due 1-30 days</div>
<svg style="left:652.5px;top:278.5px" width="6" height="6"><circle cx="2.7" cy="2.7" r="2.4" fill="#e86c80"/></svg>
<div class="t" style="left:661px;top:277.00px;font-size:9px;color:#e8eff6;letter-spacing:-0.451px;">Past due 31-60 days</div>
<svg style="left:743.5px;top:278.5px" width="6" height="6"><circle cx="2.7" cy="2.7" r="2.4" fill="#6db56f"/></svg>
<div class="t" style="left:751px;top:277.00px;font-size:9px;color:#e8eff6;letter-spacing:-0.473px;">Past due 90 days</div>
<svg style="left:821.5px;top:278.5px" width="6" height="6"><circle cx="2.7" cy="2.7" r="2.4" fill="#f0884e"/></svg>
<div class="a" style="left:829px;top:275px;width:23px;height:14px;overflow:hidden;-webkit-mask-image:linear-gradient(90deg,#000 75%,transparent)">
<div class="t" style="left:0px;top:2.00px;font-size:9px;color:#e8eff6;letter-spacing:-0.2px">Past due 120</div>
</div>
<div class="t" style="left:854px;top:276.00px;font-size:10px;color:#7f9fc4;">‹</div>
<div class="t" style="left:861px;top:276.00px;font-size:10px;color:#ffffff;font-weight:bold;">›</div>
<svg style="left:0;top:0" width="1024" height="506"><path d="M770.30 386.00A76 76 0 0 0 757.70 344.09L732.25 360.91A45.5 45.5 0 0 1 739.80 386.00Z" fill="#f8b60a"/><path d="M757.70 344.09A76 76 0 0 0 756.43 342.22L731.49 359.79A45.5 45.5 0 0 1 732.25 360.91Z" fill="#68c2de"/><path d="M756.43 342.22A76 76 0 0 0 706.95 311.06L701.87 341.13A45.5 45.5 0 0 1 731.49 359.79Z" fill="#e86c80"/><path d="M706.95 311.06A76 76 0 0 0 697.16 310.05L696.01 340.53A45.5 45.5 0 0 1 701.87 341.13Z" fill="#6db56f"/><path d="M697.16 310.05A76 76 0 1 0 770.30 386.00L739.80 386.00A45.5 45.5 0 1 1 696.01 340.53Z" fill="#f0884e"/></svg>
<div class="t" style="left:688px;top:314.00px;font-size:9.5px;color:#f4f7fa;letter-spacing:-0.344px;">233.77</div>
<div class="t" style="left:718px;top:326.00px;font-size:9.5px;color:#f4f7fa;letter-spacing:-0.498px;">1,424.88</div>
<div class="t" style="left:747px;top:347.00px;font-size:9.5px;color:#f4f7fa;letter-spacing:-0.756px;">53.50</div>
<div class="t" style="left:750.5px;top:368.00px;font-size:9.5px;color:#f4f7fa;letter-spacing:-0.498px;">1,053.86</div>
<div class="t" style="left:623px;top:442.00px;font-size:9.5px;color:#f4f7fa;letter-spacing:-0.498px;">8,569.24</div>
<div class="a" style="left:871px;top:52px;width:149px;height:430px;background:#17558f;"></div>
<div class="t" style="left:873px;top:57.00px;font-size:11px;color:#a2caf0;font-weight:bold;letter-spacing:-0.022px;">Conditional filter</div>
<svg style="left:1012px;top:60px" width="5" height="6"><path d="M1 0.5L3.8 3L1 5.5" stroke="#9fc0e0" stroke-width="1" fill="none"/></svg>
<div class="a" style="left:873px;top:73px;width:145px;height:60px;background:#195a9b;"></div>
<div class="t" style="left:878px;top:79.00px;font-size:11px;color:#dfe9f3;letter-spacing:-0.418px;">From</div>
<div class="t" style="left:943px;top:79.00px;font-size:11px;color:#dfe9f3;letter-spacing:-0.312px;">To</div>
<div class="a" style="left:877px;top:94px;width:60px;height:17px;background:#ffffff;"></div>
<div class="a" style="left:943px;top:94px;width:60px;height:17px;background:#ffffff;"></div>
<div class="t" style="left:879px;top:98.00px;font-size:11px;color:#2a2a2a;letter-spacing:0.271px;">01/05/22</div>
<div class="t" style="left:945px;top:98.00px;font-size:11px;color:#2a2a2a;letter-spacing:0.271px;">30/06/22</div>
<div class="a" style="left:881px;top:121px;width:130px;height:2px;background:#1a78dc;"></div>
<svg style="left:876px;top:117px" width="10" height="10"><circle cx="5" cy="5" r="3.8" fill="#1a72d0" stroke="#fff" stroke-width="1.6"/></svg>
<svg style="left:1005.5px;top:117px" width="10" height="10"><circle cx="5" cy="5" r="3.8" fill="#1a72d0" stroke="#fff" stroke-width="1.6"/></svg>
<div class="a" style="left:873px;top:137px;width:145px;height:149px;background:#195a9b;"></div>
<div class="t" style="left:877px;top:143.00px;font-size:11px;color:#dfe9f3;">Territory</div>
<div class="a" style="left:874px;top:155px;width:144px;height:17.5px;background:#ffffff;"></div>
<div class="a" style="left:1006px;top:155px;width:1px;height:17.5px;background:#d8d8d8;"></div>
<div class="t" style="left:877px;top:159.00px;font-size:11px;color:#8d8078;font-style:italic;letter-spacing:-0.220px;">Enter text to search</div>
<div class="t" style="left:1008.5px;top:159px;font-size:9.5px;font-weight:bold;color:#333;line-height:1">&#952;</div>
<div class="a" style="left:873px;top:172.5px;width:145px;height:113.5px;overflow:hidden">
<div class="a" style="left:50.5px;top:0px;width:1px;height:200px;background:rgba(10,40,80,0.12);"></div>
<div class="a" style="left:120px;top:0px;width:1px;height:200px;background:rgba(10,40,80,0.12);"></div>
<div class="a" style="left:1.5px;top:5.300000000000001px;width:9px;height:8.8px;background:#f0f0f0;border-radius:2px;border:0.7px solid #5a5a5a"></div>
<div class="t" style="left:16.5px;top:5.00px;font-size:11px;color:#eef3f8;letter-spacing:-0.356px;">11014</div>
<div class="t" style="left:53px;top:5.00px;font-size:11px;color:#eef3f8;">Ba Đình</div>
<div class="t" style="left:123px;top:5.00px;font-size:11px;color:#eef3f8;">Ba Đình</div>
<div class="a" style="left:1.5px;top:22.7px;width:9px;height:8.8px;background:#f0f0f0;border-radius:2px;border:0.7px solid #5a5a5a"></div>
<div class="t" style="left:16.5px;top:23.00px;font-size:11px;color:#eef3f8;letter-spacing:-0.519px;">13000</div>
<div class="t" style="left:53px;top:23.00px;font-size:11px;color:#eef3f8;">Cao bằng</div>
<div class="t" style="left:123px;top:23.00px;font-size:11px;color:#eef3f8;">Cao bằng</div>
<div class="a" style="left:1.5px;top:40.099999999999994px;width:9px;height:8.8px;background:#f0f0f0;border-radius:2px;border:0.7px solid #5a5a5a"></div>
<div class="t" style="left:16.5px;top:40.00px;font-size:11px;color:#eef3f8;letter-spacing:-0.356px;">11013</div>
<div class="t" style="left:53px;top:40.00px;font-size:11px;color:#eef3f8;">Cầu Giấy</div>
<div class="t" style="left:123px;top:40.00px;font-size:11px;color:#eef3f8;">Cau Giay</div>
<div class="a" style="left:1.5px;top:57.499999999999986px;width:9px;height:8.8px;background:#f0f0f0;border-radius:2px;border:0.7px solid #5a5a5a"></div>
<div class="t" style="left:16.5px;top:58.00px;font-size:11px;color:#eef3f8;letter-spacing:-0.519px;">40010</div>
<div class="t" style="left:53px;top:58.00px;font-size:11px;color:#eef3f8;">Châu Âu</div>
<div class="a" style="left:1.5px;top:74.89999999999999px;width:9px;height:8.8px;background:#f0f0f0;border-radius:2px;border:0.7px solid #5a5a5a"></div>
<div class="t" style="left:16.5px;top:75.00px;font-size:11px;color:#eef3f8;letter-spacing:-0.519px;">21003</div>
<div class="t" style="left:53px;top:75.00px;font-size:11px;color:#eef3f8;">Củ Chi</div>
<div class="t" style="left:123px;top:75.00px;font-size:11px;color:#eef3f8;">Cu Chi</div>
<div class="a" style="left:1.5px;top:92.3px;width:9px;height:8.8px;background:#f0f0f0;border-radius:2px;border:0.7px solid #5a5a5a"></div>
<div class="t" style="left:16.5px;top:93.00px;font-size:11px;color:#eef3f8;letter-spacing:-0.356px;">11012</div>
<div class="t" style="left:53px;top:93.00px;font-size:11px;color:#eef3f8;">Đông Anh</div>
<div class="t" style="left:123px;top:93.00px;font-size:11px;color:#eef3f8;">Dong Anh</div>
<div class="a" style="left:1.5px;top:109.69999999999999px;width:9px;height:8.8px;background:#f0f0f0;border-radius:2px;border:0.7px solid #5a5a5a"></div>
<div class="t" style="left:16.5px;top:110.00px;font-size:11px;color:#eef3f8;letter-spacing:0.134px;">11111</div>
<div class="t" style="left:53px;top:110.00px;font-size:11px;color:#eef3f8;">Gia Lâm</div>
</div>
<div class="a" style="left:873px;top:289px;width:145px;height:148px;background:#195a9b;"></div>
<div class="t" style="left:877px;top:295.00px;font-size:11px;color:#dfe9f3;">Customer group</div>
<div class="a" style="left:874px;top:307px;width:144px;height:17.5px;background:#ffffff;"></div>
<div class="a" style="left:1006px;top:307px;width:1px;height:17.5px;background:#d8d8d8;"></div>
<div class="t" style="left:877px;top:311.00px;font-size:11px;color:#8d8078;font-style:italic;letter-spacing:-0.220px;">Enter text to search</div>
<div class="t" style="left:1008.5px;top:311px;font-size:9.5px;font-weight:bold;color:#333;line-height:1">&#952;</div>
<div class="a" style="left:873px;top:324.5px;width:145px;height:112.5px;overflow:hidden">
<div class="a" style="left:56.5px;top:0px;width:1px;height:200px;background:rgba(10,40,80,0.12);"></div>
<div class="a" style="left:1.5px;top:5.300000000000001px;width:9px;height:8.8px;background:#f0f0f0;border-radius:2px;border:0.7px solid #5a5a5a"></div>
<div class="t" style="left:16.5px;top:5.00px;font-size:11px;color:#eef3f8;letter-spacing:-0.519px;">12000</div>
<div class="t" style="left:59px;top:5.00px;font-size:11px;color:#eef3f8;">Nhóm khách hàng nội bộ</div>
<div class="a" style="left:1.5px;top:22.7px;width:9px;height:8.8px;background:#f0f0f0;border-radius:2px;border:0.7px solid #5a5a5a"></div>
<div class="t" style="left:16.5px;top:23.00px;font-size:11px;color:#eef3f8;letter-spacing:-0.519px;">12001</div>
<div class="t" style="left:59px;top:23.00px;font-size:11px;color:#eef3f8;">Nhà cung cấp tài sản</div>
<div class="a" style="left:1.5px;top:40.099999999999994px;width:9px;height:8.8px;background:#f0f0f0;border-radius:2px;border:0.7px solid #5a5a5a"></div>
<div class="t" style="left:16.5px;top:40.00px;font-size:11px;color:#eef3f8;letter-spacing:-0.519px;">12004</div>
<div class="t" style="left:59px;top:40.00px;font-size:11px;color:#eef3f8;">Nhóm khác</div>
<div class="a" style="left:1.5px;top:57.499999999999986px;width:9px;height:8.8px;background:#f0f0f0;border-radius:2px;border:0.7px solid #5a5a5a"></div>
<div class="t" style="left:16.5px;top:58.00px;font-size:11px;color:#eef3f8;letter-spacing:-0.520px;">210000</div>
<div class="t" style="left:59px;top:58.00px;font-size:11px;color:#eef3f8;">Nhà cung cấp bán hàng</div>
<div class="a" style="left:1.5px;top:74.89999999999999px;width:9px;height:8.8px;background:#f0f0f0;border-radius:2px;border:0.7px solid #5a5a5a"></div>
<div class="t" style="left:16.5px;top:75.00px;font-size:11px;color:#eef3f8;letter-spacing:-0.520px;">254000</div>
<div class="t" style="left:59px;top:75.00px;font-size:11px;color:#eef3f8;">[ Nhà cung cấp hàng hóa</div>
<div class="a" style="left:1.5px;top:92.3px;width:9px;height:8.8px;background:#f0f0f0;border-radius:2px;border:0.7px solid #5a5a5a"></div>
<div class="t" style="left:16.5px;top:93.00px;font-size:11px;color:#eef3f8;letter-spacing:-0.520px;">254100</div>
<div class="t" style="left:59px;top:93.00px;font-size:11px;color:#eef3f8;">[ Khách hàng phân phối</div>
<div class="a" style="left:1.5px;top:109.69999999999999px;width:9px;height:8.8px;background:#f0f0f0;border-radius:2px;border:0.7px solid #5a5a5a"></div>
<div class="t" style="left:16.5px;top:110.00px;font-size:11px;color:#eef3f8;letter-spacing:-0.520px;">254200</div>
<div class="t" style="left:59px;top:110.00px;font-size:11px;color:#eef3f8;">[ Khách hàng</div>
</div>
<div class="a" style="left:886px;top:284px;width:69px;height:1px;background:#7089a3;"></div>
<div class="a" style="left:886px;top:436px;width:51px;height:1px;background:#7089a3;"></div>
<div class="a" style="left:1017px;top:175px;width:1.5px;height:72px;background:#5d7d9c;"></div>
<div class="a" style="left:873px;top:441px;width:145px;height:39px;background:#195a9b;"></div>
<div class="t" style="left:646px;width:600px;text-align:center;top:450.00px;font-size:10.5px;color:#dce7f2;letter-spacing:-0.365px;">Last Refresh Time</div>
<div class="t" style="left:646.5px;width:600px;text-align:center;top:465.00px;font-size:9.5px;color:#9cc8f2;letter-spacing:0.021px;">13/06/2022 10:16:41 AM</div>
<div class="a" style="left:168px;top:485px;width:64px;height:20px;background:#1a66b8;border:1px solid #2a80d8"></div>
<div class="t" style="left:174px;top:491.00px;font-size:10.5px;color:#f3d913;font-weight:bold;letter-spacing:-0.301px;">OVERVIEW</div>
<div class="t" style="left:241px;top:491.00px;font-size:10.5px;color:#a9cbec;font-weight:bold;letter-spacing:-0.714px;">SALES PROCESS</div>
<div class="t" style="left:335px;top:491.00px;font-size:10.5px;color:#a9cbec;font-weight:bold;letter-spacing:-0.364px;">REPORTING LIST</div>
<svg style="left:1012px;top:490px" width="7" height="9" viewBox="0 0 7 9" fill="none" stroke="#c5d6e8" stroke-width="0.8"><path d="M2.2 0.8H5L4.6 4.2H2.6Z"/><path d="M1.3 4.6H5.9M3.6 4.6V8.5"/></svg>
</body></html>
